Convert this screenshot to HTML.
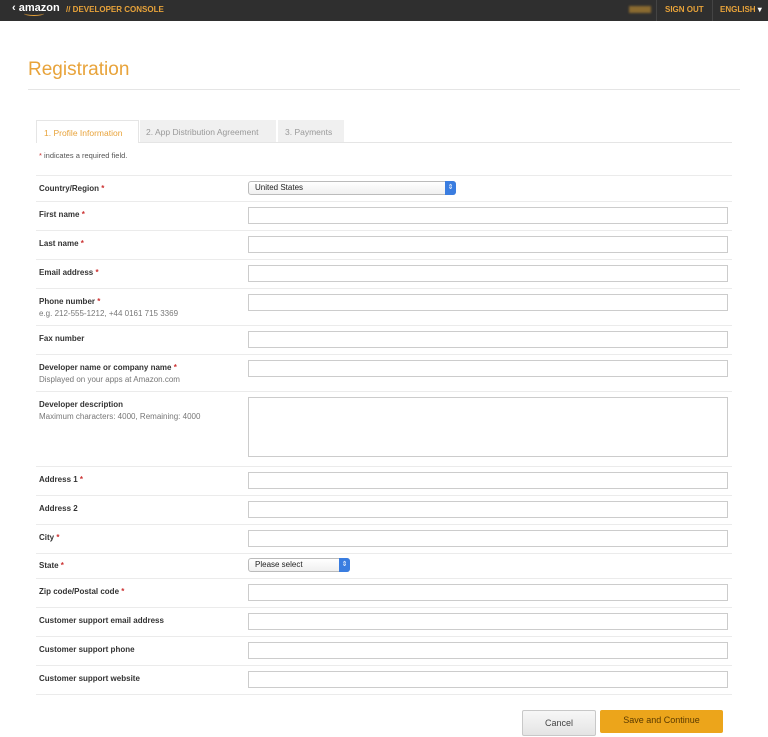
<!DOCTYPE html>
<html><head><meta charset="utf-8"><style>
*{box-sizing:border-box;margin:0;padding:0}
body{width:768px;height:737px;background:#fff;font-family:"Liberation Sans",Arial,sans-serif;position:relative;overflow:hidden;color:#333}
.a{position:absolute}
.hdr{left:0;top:0;width:768px;height:21px;background:#2f2f2f}
.row{left:36px;width:696px;border-top:1px solid #ebebeb}
.lb{left:39px;font-size:8px;font-weight:bold;color:#333;white-space:nowrap}
.sb{left:39px;font-size:8px;color:#777;white-space:nowrap}
.r{color:#c33}
.in{left:248px;width:480px;height:17px;border:1px solid #ccc;background:#fff}
.sel{height:14px;border:1px solid #bbb;border-radius:3px;background:linear-gradient(#fff,#f0f0f0);font-size:8px;padding-left:6px;line-height:12px;color:#222}
.sel b{position:absolute;right:-1px;top:-1px;width:11px;height:14px;background:#3a7de0;border-radius:0 3px 3px 0;color:#fff;font-size:7px;line-height:14px;text-align:center;font-weight:normal}
</style></head><body>
<div class="a hdr"></div>
<div class="a" style="left:12px;top:2px;color:#fff;font-size:11px;font-weight:bold">‹ amazon</div>
<div class="a" style="left:24px;top:11px;width:20px;height:5px;border-bottom:1.5px solid #e8a33a;border-radius:0 0 50% 50%"></div>
<div class="a" style="left:66px;top:5px;color:#e8a33a;font-size:8px;font-weight:bold">// DEVELOPER CONSOLE</div>
<div class="a" style="left:629px;top:6px;width:22px;height:7px;background:#8a6a30;filter:blur(1px)"></div>
<div class="a" style="left:656px;top:0;width:1px;height:21px;background:#444"></div>
<div class="a" style="left:665px;top:5px;color:#e8a33a;font-size:8px;font-weight:bold">SIGN OUT</div>
<div class="a" style="left:712px;top:0;width:1px;height:21px;background:#444"></div>
<div class="a" style="left:720px;top:5px;color:#e8a33a;font-size:8px;font-weight:bold">ENGLISH <span style="color:#fff">▾</span></div>

<div class="a" style="left:28px;top:59px;color:#e8a33a;font-size:19px">Registration</div>
<div class="a" style="left:28px;top:89px;width:712px;height:1px;background:#e5e5e5"></div>

<div class="a" style="left:36px;top:142px;width:696px;height:1px;background:#e5e5e5"></div>
<div class="a" style="left:36px;top:120px;width:103px;height:23px;background:#fff;border:1px solid #e5e5e5;border-bottom:none;color:#e8a33a;font-size:8.5px;padding:7px 0 0 7px">1. Profile Information</div>
<div class="a" style="left:140px;top:120px;width:136px;height:22px;background:#f0f0f0;color:#999;font-size:8.5px;padding:7px 0 0 6px">2. App Distribution Agreement</div>
<div class="a" style="left:278px;top:120px;width:66px;height:22px;background:#f0f0f0;color:#999;font-size:8.5px;padding:7px 0 0 7px">3. Payments</div>
<div class="a" style="left:39px;top:151px;font-size:7.5px;color:#555"><span class="r">*</span> indicates a required field.</div>

<div class="a row" style="top:175px"></div>
<div class="a lb" style="top:184px">Country/Region <span class="r">*</span></div>
<div class="a sel" style="left:248px;top:181px;width:208px">United States<b>⇕</b></div>

<div class="a row" style="top:201px"></div>
<div class="a lb" style="top:210px">First name <span class="r">*</span></div>
<div class="a in" style="top:207px"></div>

<div class="a row" style="top:230px"></div>
<div class="a lb" style="top:239px">Last name <span class="r">*</span></div>
<div class="a in" style="top:236px"></div>

<div class="a row" style="top:259px"></div>
<div class="a lb" style="top:268px">Email address <span class="r">*</span></div>
<div class="a in" style="top:265px"></div>

<div class="a row" style="top:288px"></div>
<div class="a lb" style="top:297px">Phone number <span class="r">*</span></div>
<div class="a sb" style="top:309px">e.g. 212-555-1212, +44 0161 715 3369</div>
<div class="a in" style="top:294px"></div>

<div class="a row" style="top:325px"></div>
<div class="a lb" style="top:334px">Fax number</div>
<div class="a in" style="top:331px"></div>

<div class="a row" style="top:354px"></div>
<div class="a lb" style="top:363px">Developer name or company name <span class="r">*</span></div>
<div class="a sb" style="top:375px">Displayed on your apps at Amazon.com</div>
<div class="a in" style="top:360px"></div>

<div class="a row" style="top:391px"></div>
<div class="a lb" style="top:400px">Developer description</div>
<div class="a sb" style="top:412px">Maximum characters: 4000, Remaining: 4000</div>
<div class="a in" style="top:397px;height:60px"></div>

<div class="a row" style="top:466px"></div>
<div class="a lb" style="top:475px">Address 1 <span class="r">*</span></div>
<div class="a in" style="top:472px"></div>

<div class="a row" style="top:495px"></div>
<div class="a lb" style="top:504px">Address 2</div>
<div class="a in" style="top:501px"></div>

<div class="a row" style="top:524px"></div>
<div class="a lb" style="top:533px">City <span class="r">*</span></div>
<div class="a in" style="top:530px"></div>

<div class="a row" style="top:553px"></div>
<div class="a lb" style="top:561px">State <span class="r">*</span></div>
<div class="a sel" style="left:248px;top:558px;width:102px">Please select<b>⇕</b></div>

<div class="a row" style="top:578px"></div>
<div class="a lb" style="top:587px">Zip code/Postal code <span class="r">*</span></div>
<div class="a in" style="top:584px"></div>

<div class="a row" style="top:607px"></div>
<div class="a lb" style="top:616px">Customer support email address</div>
<div class="a in" style="top:613px"></div>

<div class="a row" style="top:636px"></div>
<div class="a lb" style="top:645px">Customer support phone</div>
<div class="a in" style="top:642px"></div>

<div class="a row" style="top:665px"></div>
<div class="a lb" style="top:674px">Customer support website</div>
<div class="a in" style="top:671px"></div>
<div class="a row" style="top:694px"></div>

<div class="a" style="left:522px;top:710px;width:74px;height:26px;border:1px solid #c8c8c8;border-radius:2px;background:linear-gradient(#f7f7f7,#e4e4e4);font-size:9px;color:#444;text-align:center;line-height:24px">Cancel</div>
<div class="a" style="left:600px;top:710px;width:123px;height:23px;border-radius:2px;background:#eca51b;font-size:9px;color:#5a3a00;text-align:center;line-height:21px">Save and Continue</div>
</body></html>
